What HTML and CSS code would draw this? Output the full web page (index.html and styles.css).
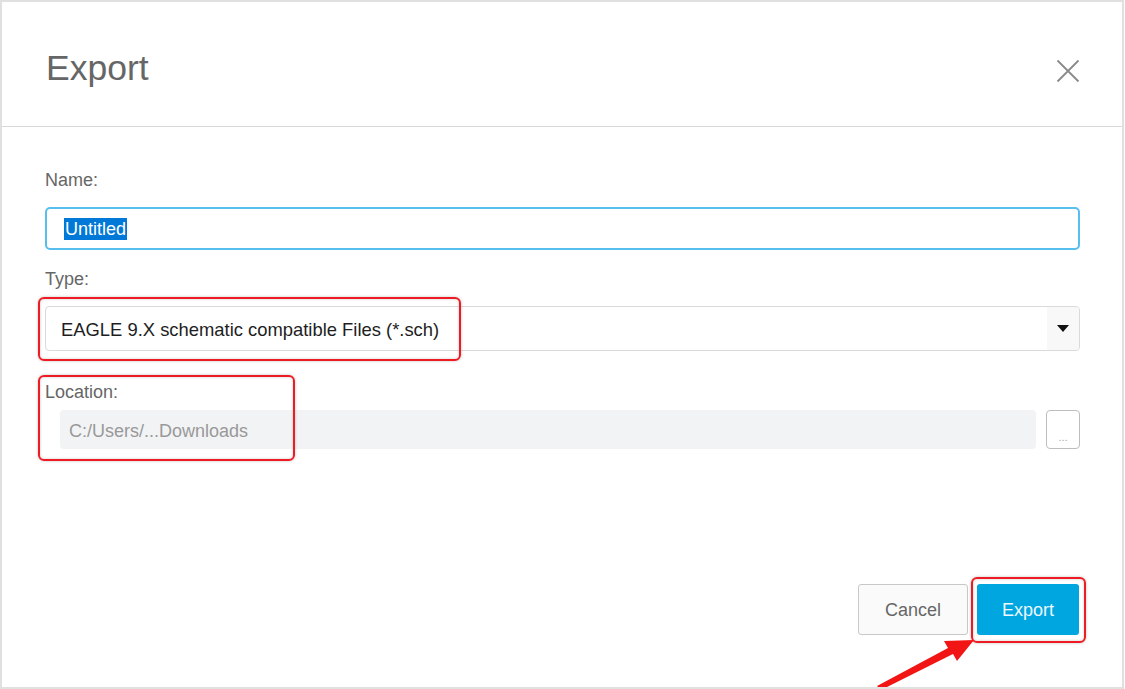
FILE: index.html
```html
<!DOCTYPE html>
<html>
<head>
<meta charset="utf-8">
<link rel="stylesheet" href="styles.css">
</head>
<body>
<div class="dialog">
  <header class="head">
    <h1 class="title">Export</h1>
    <button class="close" aria-label="Close">
      <svg width="24" height="24" viewBox="0 0 24 24"><path d="M1.5 1.5 L22.5 22.5 M22.5 1.5 L1.5 22.5" stroke="#8a8a8a" stroke-width="1.8" fill="none"/></svg>
    </button>
  </header>
  <main class="body">
    <div class="field">
      <label class="label">Name:</label>
      <div class="input focused"><span class="selected">Untitled</span></div>
    </div>
    <div class="field">
      <label class="label">Type:</label>
      <div class="select">
        <span class="select-text">EAGLE 9.X schematic compatible Files (*.sch)</span>
        <span class="select-arrow"><svg width="12" height="8" viewBox="0 0 12 8"><path d="M0 0 H12 L6 7 Z" fill="#111"/></svg></span>
      </div>
    </div>
    <div class="field loc">
      <label class="label">Location:</label>
      <div class="loc-row">
        <div class="loc-input">C:/Users/...Downloads</div>
        <button class="browse">...</button>
      </div>
    </div>
  </main>
  <footer class="foot">
    <button class="btn cancel">Cancel</button>
    <button class="btn primary">Export</button>
  </footer>

  <div class="mark mark-type"></div>
  <div class="mark mark-loc"></div>
  <div class="mark mark-export"></div>
  <svg class="arrow" width="1125" height="689" viewBox="0 0 1125 689">
    <polygon points="877,686 948,648 944,641 974,640 957,661 953,654 881,690" fill="#f21515"/>
  </svg>
</div>
</body>
</html>
```
FILE: styles.css
```css
* { box-sizing: border-box; }
html, body { margin: 0; padding: 0; background: #fff; }
body { font-family: "Liberation Sans", Arial, sans-serif; font-size: 18px; }

.dialog {
  position: relative;
  width: 1124px;
  height: 689px;
  border: 2px solid #e0e0e0;
  display: flex;
  flex-direction: column;
  overflow: hidden;
}

.head {
  height: 125px;
  border-bottom: 1px solid #d8d8d8;
  display: flex;
  align-items: center;
  justify-content: space-between;
  padding: 8px 42px 0 44px;
}
.title {
  margin: 0;
  font-size: 35.5px;
  line-height: 35px;
  font-weight: normal;
  color: #666;
}
.close {
  border: 0;
  background: none;
  padding: 0;
  width: 24px;
  height: 24px;
  margin-top: 6px;
  display: flex;
}

.body {
  flex: 1;
  padding: 43px 42px 0 43px;
}
.field { display: flex; flex-direction: column; }
.label {
  display: block;
  line-height: 20px;
  color: #666;
  margin-bottom: 17px;
}
.input {
  height: 43px;
  border: 2px solid #56bfee;
  border-radius: 5px;
  display: flex;
  align-items: center;
  padding-left: 18px;
  margin-bottom: 19px;
}
.selected {
  background: #0078d7;
  color: #fff;
  line-height: 22px;
  padding: 0 1px;
  margin-left: -1px;
}

.select {
  height: 45px;
  border: 1px solid #dadada;
  border-radius: 4px;
  display: flex;
  align-items: center;
  justify-content: space-between;
  overflow: hidden;
}
.select-text { color: #1e1e1e; padding-left: 15px; font-size: 18.4px; padding-top: 2px; }
.select-arrow {
  width: 32px;
  align-self: stretch;
  background: #f8f8f8;
  display: flex;
  align-items: center;
  justify-content: center;
  padding-top: 1px;
}

.loc { margin-top: 31px; }
.loc .label { margin-bottom: 8px; }
.loc-row {
  display: flex;
  gap: 10px;
  padding-left: 15px;
}
.loc-input {
  flex: 1;
  height: 39px;
  background: #f2f3f5;
  border-radius: 4px;
  color: #999;
  display: flex;
  align-items: center;
  padding-left: 9px;
  padding-top: 3px;
}
.browse {
  width: 34px;
  height: 39px;
  border: 1px solid #bdbdbd;
  border-radius: 4px;
  background: #fff;
  color: #aaa;
  font-family: "Liberation Sans", Arial, sans-serif;
  font-size: 11px;
  padding: 14px 0 0 0;
  letter-spacing: 0;
}

.foot {
  display: flex;
  justify-content: flex-end;
  gap: 9px;
  padding: 0 43px 52px 0;
}
.btn {
  height: 51px;
  border-radius: 3px;
  font-family: "Liberation Sans", Arial, sans-serif;
  font-size: 18px;
  padding: 2px 0 0 0;
}
.cancel {
  width: 110px;
  background: #fafafa;
  border: 1px solid #c8c8c8;
  color: #666;
}
.primary {
  width: 102px;
  background: #00a6e0;
  border: 0;
  color: #eef8fd;
}

.mark {
  position: absolute;
  border: 2px solid #ee1b22;
  border-radius: 6px;
  box-shadow: 0 0 3px rgba(0, 0, 0, 0.25), inset 0 0 3px rgba(0, 0, 0, 0.2);
  pointer-events: none;
}
.mark-type { left: 36px; top: 295px; width: 423px; height: 64px; }
.mark-loc { left: 36px; top: 373px; width: 257px; height: 86px; }
.mark-export { left: 969px; top: 575px; width: 115px; height: 66px; }

.arrow {
  position: absolute;
  left: -2px;
  top: -2px;
  pointer-events: none;
}
```
